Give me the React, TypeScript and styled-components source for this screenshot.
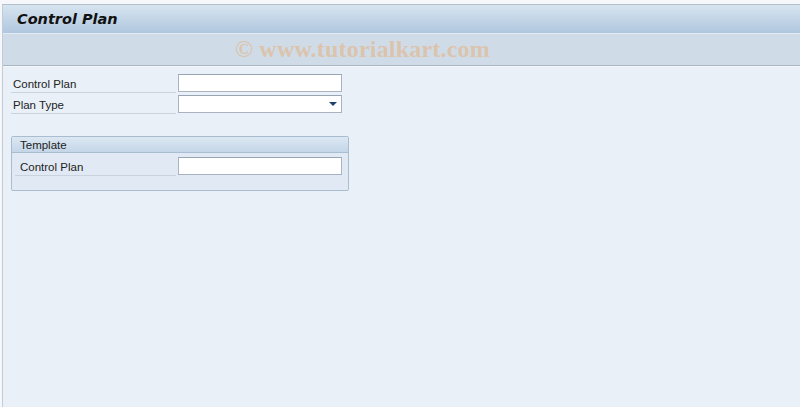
import React from "react";
import styled, { createGlobalStyle } from "styled-components";

const Global = createGlobalStyle`
  html, body { margin: 0; padding: 0; }
  body {
    background: #f5f7fa;
    font-family: "Liberation Sans", Arial, sans-serif;
    width: 800px;
    height: 407px;
    overflow: hidden;
  }
`;

const Page = styled.div`
  height: 407px;
  padding: 4px 0 0 2px;
  box-sizing: border-box;
  display: flex;
  flex-direction: column;
`;

const Frame = styled.div`
  flex: 1;
  display: flex;
  flex-direction: column;
  border-left: 1px solid #c2ccd6;
  border-top: 1px solid #b4bfca;
  background: #e9f0f8;
`;

const TitleBar = styled.div`
  height: 28px;
  display: flex;
  align-items: center;
  padding-left: 14px;
  background: linear-gradient(#d7e4f0, #afc7de);
  border-bottom: 1px solid #e4edf6;
`;

const Title = styled.h1`
  margin: 0;
  font-family: "DejaVu Sans", Verdana, sans-serif;
  font-size: 14.5px;
  font-weight: bold;
  font-style: italic;
  color: #111;
`;

const Toolbar = styled.div`
  height: 31px;
  display: flex;
  align-items: center;
  justify-content: center;
  background: #cfdce8;
  border-bottom: 1px solid #a8b5c2;
  box-shadow: 0 1px 0 #f3f6fa;
  padding-right: 78px;
`;

const Watermark = styled.span`
  font-family: "Liberation Serif", "Times New Roman", serif;
  font-weight: bold;
  font-size: 24px;
  color: rgba(234, 170, 112, 0.5);
  letter-spacing: 0.2px;
`;

const Content = styled.div`
  display: flex;
  flex-direction: column;
  padding: 6px 0 0 8px;
`;

const Row = styled.div<{ $indent?: number }>`
  display: flex;
  align-items: center;
  height: 21px;
  padding-left: ${(p) => p.$indent ?? 0}px;
`;

const Label = styled.div<{ $width: number; $pad: number }>`
  width: ${(p) => p.$width}px;
  height: 20px;
  box-sizing: border-box;
  padding: 2px 0 0 ${(p) => p.$pad}px;
  display: flex;
  align-items: center;
  font-size: 11.5px;
  color: #222;
  border-bottom: 1px solid #c9d3dd;
  align-self: flex-start;
  margin-top: 1px;
`;

const Field = styled.div`
  position: relative;
  width: 164px;
  height: 18px;
  box-sizing: border-box;
  margin-left: 2px;
  background: #fff;
  border: 1px solid #a9b4c0;
  border-top-color: #98a4b1;
`;

const Arrow = styled.div`
  position: absolute;
  right: 4px;
  top: 6px;
  width: 0;
  height: 0;
  border-left: 4px solid transparent;
  border-right: 4px solid transparent;
  border-top: 4px solid #1f3f6e;
`;

const Group = styled.div`
  margin-top: 22px;
  width: 338px;
  height: 55px;
  box-sizing: border-box;
  border: 1px solid #a9bdd0;
  border-radius: 2px;
  background: #e1eaf4;
  display: flex;
  flex-direction: column;
`;

const GroupHeader = styled.div`
  height: 15px;
  display: flex;
  align-items: center;
  padding-left: 8px;
  font-size: 11.5px;
  color: #222;
  background: linear-gradient(#dce7f2, #c4d6e8);
  border-bottom: 1px solid #a9bdd0;
`;

const GroupBody = styled.div`
  padding-top: 2px;
`;

export default function App() {
  return (
    <>
      <Global />
      <Page>
        <Frame>
          <TitleBar>
            <Title>Control Plan</Title>
          </TitleBar>
          <Toolbar>
            <Watermark>© www.tutorialkart.com</Watermark>
          </Toolbar>
          <Content>
            <Row>
              <Label $width={165} $pad={2}>Control Plan</Label>
              <Field />
            </Row>
            <Row>
              <Label $width={165} $pad={2}>Plan Type</Label>
              <Field>
                <Arrow />
              </Field>
            </Row>
            <Group>
              <GroupHeader>Template</GroupHeader>
              <GroupBody>
                <Row $indent={3}>
                  <Label $width={161} $pad={5}>Control Plan</Label>
                  <Field />
                </Row>
              </GroupBody>
            </Group>
          </Content>
        </Frame>
      </Page>
    </>
  );
}
